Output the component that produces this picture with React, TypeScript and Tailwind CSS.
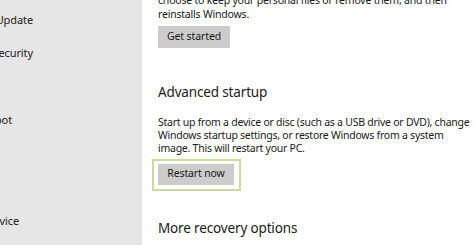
import React from "react";

const sideItems: { label: string; end: number }[] = [
  { label: "Windows Update", end: 33 },
  { label: "Windows Security", end: 33 },
  { label: "Backup", end: -3 },
  { label: "Troubleshoot", end: 12 },
  { label: "Recovery", end: -3 },
  { label: "Activation", end: -3 },
  { label: "Find my device", end: 19 },
];

export default function App() {
  return (
    <div
      className="flex h-[245px] w-[474px] overflow-hidden bg-white text-[#1a1a1a]"
      style={{ fontFamily: '"Noto Sans", "Open Sans", sans-serif' }}
    >
      <aside className="w-[142px] shrink-0 overflow-hidden bg-[#e6e6e6] pt-[3px] text-[11px] tracking-[-0.1px]">
        {sideItems.map((it) => (
          <div key={it.label} className="flex h-[33.5px] items-center">
            <div className="flex justify-end whitespace-nowrap" style={{ width: Math.max(it.end, 0), marginLeft: Math.min(it.end, 0) }}>
              <span className="shrink-0">{it.label}</span>
            </div>
          </div>
        ))}
      </aside>
      <main className="min-w-0 flex-1 overflow-hidden pl-[16px]">
        <p className="-mt-[21.5px] whitespace-nowrap text-[10.5px] leading-[14px] tracking-[-0.2px]">
          If your PC isn’t running well, resetting it might help. This lets you
          <br />
          choose to keep your personal files or remove them, and then
          <br />
          reinstalls Windows.
        </p>
        <button className="mt-[5px] flex h-[22px] w-[72px] items-center justify-center bg-[#cccccc] text-[10.5px] tracking-[-0.1px]">
          Get started
        </button>
        <h2 className="mt-[34.5px] text-[13.5px] leading-[20px] tracking-[-0.15px]">Advanced startup</h2>
        <p className="mt-[13.5px] whitespace-nowrap text-[10.5px] leading-[13px] tracking-[-0.25px]">
          Start up from a device or disc (such as a USB drive or DVD), change
          <br />
          Windows startup settings, or restore Windows from a system
          <br />
          image. This will restart your PC.
        </p>
        <div className="-ml-[6px] mt-[4px] w-[89px] border-2 border-[#c8dba0] pb-[4px] pl-[4px] pr-[5px] pt-[3px]">
          <button className="flex h-[21px] w-[76px] items-center justify-center bg-[#cccccc] text-[10.5px] tracking-[-0.15px]">
            Restart now
          </button>
        </div>
        <h2 className="mt-[27px] text-[13.5px] leading-[20px] tracking-[-0.15px]">More recovery options</h2>
      </main>
    </div>
  );
}
